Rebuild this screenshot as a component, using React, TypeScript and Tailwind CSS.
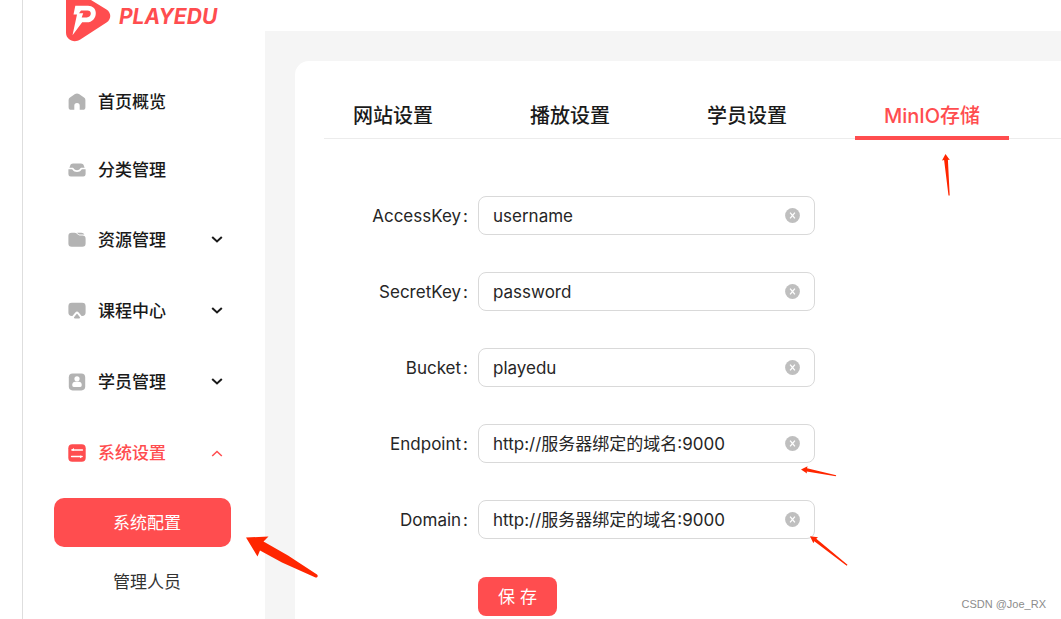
import { useState } from "react";
import type { ReactNode } from "react";

type MenuItem = {
  label: string;
  icon: ReactNode;
  expandable?: boolean;
  active?: boolean;
};

const HomeIcon = () => (
  <svg width="18" height="18" viewBox="0 0 18 18" fill="currentColor" aria-hidden="true">
    <path d="M7 1.100a3.600 3.600 0 0 1 4 0l5 3.400a3 3 0 0 1 1.400 2.500v7.200a2.600 2.600 0 0 1-2.600 2.600h-3.100v-4a2.700 2.700 0 0 0-5.400 0v4H3.200a2.600 2.600 0 0 1-2.600-2.600V7A3 3 0 0 1 2 4.500Z" />
  </svg>
);

const InboxIcon = () => (
  <svg width="18" height="18" viewBox="0 0 18 18" fill="currentColor" aria-hidden="true">
    <path d="M5 2.500h8c1.400 0 2.300.7 2.700 1.800l.9 2.500h-2.800c-1.100 0-1.500.6-2 1.300-.5.800-1 1.100-2.800 1.100s-2.300-.3-2.800-1.100c-.5-.7-.9-1.300-2-1.300H1.400l.9-2.500C2.700 3.200 3.600 2.500 5 2.500Z" />
    <path d="M.4 8.200h3.300c.6 0 .9.300 1.300 1 .7 1.200 1.900 1.700 4 1.700s3.300-.5 4-1.700c.4-.7.7-1 1.300-1h3.300v5a2.400 2.400 0 0 1-2.400 2.400H2.800a2.400 2.400 0 0 1-2.400-2.400Z" />
  </svg>
);

const FolderIcon = () => (
  <svg width="18" height="18" viewBox="0 0 18 18" fill="currentColor" aria-hidden="true">
    <path d="M3.700 1.700h2.800c.9 0 1.600.3 2.200.9l1 1c.5.500 1.100.8 1.800.8h2.800a3.300 3.300 0 0 1 3.300 3.300v4.800a3.300 3.300 0 0 1-3.300 3.300H3.700a3.300 3.300 0 0 1-3.300-3.300V5a3.300 3.300 0 0 1 3.300-3.300Z" />
    <path d="M9 1.700h4.300c1.500 0 2.700.9 3.100 2.100-.5-.2-1-.3-1.600-.3h-3.300c-.5 0-.9-.2-1.200-.5Z" />
  </svg>
);

const CourseIcon = () => (
  <svg width="18" height="18" viewBox="0 0 18 18" fill="currentColor" aria-hidden="true">
    <path d="M3.800.8h10.400a3.400 3.400 0 0 1 3.400 3.400v6.400a3.400 3.400 0 0 1-3.400 3.400h-.6l-2.900-3.400a2.200 2.200 0 0 0-3.400 0L4.400 14h-.6A3.400 3.400 0 0 1 .4 10.600V4.200A3.400 3.400 0 0 1 3.800.8Z" />
    <path d="M8.200 12.400a1 1 0 0 1 1.600 0l2 2.600c.5.700.1 1.500-.7 1.500H6.900c-.8 0-1.200-.8-.7-1.500Z" />
  </svg>
);

const StudentIcon = () => (
  <svg width="18" height="18" viewBox="0 0 18 18" aria-hidden="true">
    <rect x=".8" y=".6" width="16.400" height="16.800" rx="3.800" fill="currentColor" />
    <circle cx="9" cy="5.800" r="2.600" fill="#fff" />
    <path d="M7.200 8.800h3.600c1.700 0 2.900 1.200 2.900 2.800v.9c0 .8-.6 1.400-1.400 1.400H5.700c-.8 0-1.400-.6-1.400-1.400v-.9c0-1.600 1.200-2.800 2.900-2.800Z" fill="#fff" />
  </svg>
);

const SettingIcon = () => (
  <svg width="18" height="18" viewBox="0 0 18 18" aria-hidden="true">
    <rect x=".3" y=".3" width="17.400" height="17.400" rx="4" fill="currentColor" />
    <path d="M4 6h10.400M3.600 12.400H14" stroke="#fff" strokeWidth="1.500" strokeLinecap="round" />
    <path d="M3.200 6 6 4v2.700ZM14.800 12.400 12 14.300v-2.700Z" fill="#fff" />
  </svg>
);

const Chevron = ({ up }: { up?: boolean }) => (
  <svg width="12" height="8" viewBox="0 0 12 8" fill="none" stroke="currentColor" aria-hidden="true">
    <path
      d={up ? "M1.200 7 6 2.500 10.800 7" : "M1.200 1 6 5.500 10.800 1"}
      strokeWidth={up ? 1.5 : 2}
    />
  </svg>
);

const Logo = () => (
  <svg width="45" height="42" viewBox="0 0 45 42" aria-hidden="true">
    <path
      d="M0 0h25l15.500 9.500c5 3.100 5 9.900 0 13L14.300 39.600C8 43.500 0 40 0 32.500Z"
      fill="#ff4d4f"
    />
    <path
      fillRule="evenodd"
      d="M9.300 5.700H22c4.600 0 7.800 2.900 7.800 7.200 0 5.400-3.700 9.400-9 9.400h-4.600L6.500 35.300 11 14.500H7.500ZM15 10.500l-2 2.700h4.200l-1.500 4.300h5c2.500 0 4.100-1.600 4.100-3.900 0-1.900-1.200-3.100-3.300-3.100Z"
      fill="#fff"
    />
  </svg>
);

const menuItems: MenuItem[] = [
  { label: "首页概览", icon: <HomeIcon /> },
  { label: "分类管理", icon: <InboxIcon /> },
  { label: "资源管理", icon: <FolderIcon />, expandable: true },
  { label: "课程中心", icon: <CourseIcon />, expandable: true },
  { label: "学员管理", icon: <StudentIcon />, expandable: true },
  { label: "系统设置", icon: <SettingIcon />, expandable: true, active: true },
];

const tabs = ["网站设置", "播放设置", "学员设置", "MinIO存储"];

const fields = [
  { name: "AccessKey", value: "username" },
  { name: "SecretKey", value: "password" },
  { name: "Bucket", value: "playedu" },
  { name: "Endpoint", value: "http://服务器绑定的域名:9000" },
  { name: "Domain", value: "http://服务器绑定的域名:9000" },
];

const Sidebar = () => (
  <aside className="ml-[22px] w-[243px] shrink-0 border-l border-[#dedede]">
    <div className="flex h-[68px] items-start pl-[43px]">
      <Logo />
      <span className="mt-[5px] ml-2 text-[21px] leading-6 font-bold text-[#ff4d4f] italic">
        PLAYEDU
      </span>
    </div>
    <nav>
      {menuItems.map((item) => (
        <button
          key={item.label}
          type="button"
          className={`flex w-full items-center gap-3 pr-[42px] pl-[45px] text-[17px] ${
            item.expandable ? "h-[71px]" : "h-[68px]"
          } ${item.active ? "text-[#ff4d4f]" : "text-[#1a1a1a]"}`}
        >
          <span className={item.active ? "" : "text-[#b3b3b3]"}>{item.icon}</span>
          <span className="pt-0.5 font-medium">{item.label}</span>
          {item.expandable && (
            <span className="ml-auto">
              <Chevron up={item.active} />
            </span>
          )}
        </button>
      ))}
      <div className="mt-[10px] mr-[34px] ml-[31px] flex flex-col gap-[10px]">
        <button
          type="button"
          className="h-[49px] rounded-[10px] bg-[#ff4d4f] pt-0.5 pl-[59px] text-left text-[17px] text-white"
        >
          系统配置
        </button>
        <button
          type="button"
          className="h-[49px] pt-0.5 pl-[59px] text-left text-[17px] text-[#333]"
        >
          管理人员
        </button>
      </div>
    </nav>
  </aside>
);

const ConfigField = ({ name, value }: { name: string; value: string }) => {
  const [text, setText] = useState(value);

  return (
    <div className="flex items-center">
      <label htmlFor={name} className="w-36 pt-0.5 text-right text-[17px] text-[#262626]">
        {name}
        <span className="ml-[2px]">:</span>
      </label>
      <div className="ml-[10px] flex h-[39px] w-[337px] items-center rounded-lg border border-[#d9d9d9] px-[14px]">
        <input
          id={name}
          value={text}
          onChange={(e) => setText(e.target.value)}
          className="min-w-0 flex-1 pt-0.5 text-[17px] text-[#262626] outline-none"
        />
        <button type="button" aria-label={`Clear ${name}`} onClick={() => setText("")}>
          <svg width="15" height="15" viewBox="0 0 15 15" aria-hidden="true">
            <circle cx="7.500" cy="7.500" r="7.400" fill="#bfbfbf" />
            <path d="m5.100 4.600 4.800 5.800m0-5.800-4.800 5.800" stroke="#fff" strokeWidth="1.300" />
          </svg>
        </button>
      </div>
    </div>
  );
};

// hand drawn pointers laid over the page
const Pointers = () => (
  <div className="pointer-events-none text-[#ff2600]">
    <svg className="absolute top-[154px] left-[941px]" width="10" height="42" viewBox="0 0 10 42" fill="currentColor" aria-hidden="true">
      <path d="M4.500 0 8.800 6 6.900 5.700 8.700 41.500H7.500L3.100 5.900 1 6.500Z" />
    </svg>
    <svg className="absolute top-[466px] left-[801px]" width="36" height="11" viewBox="0 0 36 11" fill="currentColor" aria-hidden="true">
      <path d="M0 3.400 6.600.3 6 2.200 35.200 9.200 34.800 10.200 5.700 5.400 6 7.500Z" />
    </svg>
    <svg className="absolute top-[536px] left-[810px]" width="38" height="30" viewBox="0 0 38 30" fill="currentColor" aria-hidden="true">
      <path d="M0 .3 8 1.200 6.300 2.700 37.500 28.800 36.700 29.700 4.300 5.300 3.400 7.300Z" />
    </svg>
    <svg className="absolute top-[536px] left-[246px]" width="73" height="43" viewBox="0 0 73 43" fill="currentColor" aria-hidden="true">
      <path d="M0 1.500 22.500.5 17.500 5.500 42 19.500 71 38.500c1.500 1.500.5 3.500-1.500 3L36 26.500 14 14.500 11.500 20.500Z" />
    </svg>
  </div>
);

const App = () => {
  const [currentTab, setCurrentTab] = useState("MinIO存储");

  return (
    <div className="relative flex min-h-screen overflow-hidden bg-white font-[Inter,'Noto_Sans_CJK_SC',sans-serif]">
      <Sidebar />
      <main className="flex min-w-0 flex-1 flex-col">
        <div className="h-[31px] shrink-0" />
        <div className="flex flex-1 flex-col bg-[#f5f5f5] pt-[30px] pl-[30px]">
          <section className="flex-1 rounded-tl-[14px] bg-white pt-[30px] pl-[29px]">
            <div role="tablist" className="flex h-12 gap-[39px] border-b border-[#ececec]">
              {tabs.map((tab) => (
                <button
                  key={tab}
                  type="button"
                  role="tab"
                  aria-selected={tab === currentTab}
                  onClick={() => setCurrentTab(tab)}
                  className={`h-[49px] shrink-0 border-b-4 px-[29px] pt-1 text-[20px] font-medium whitespace-nowrap ${
                    tab === currentTab
                      ? "border-[#ff4d4f] text-[#ff4d4f]"
                      : "border-transparent text-[#1a1a1a]"
                  }`}
                >
                  {tab}
                </button>
              ))}
            </div>
            <form className="mt-[57px]" onSubmit={(e) => e.preventDefault()}>
              <div className="flex flex-col gap-[37px]">
                {fields.map((field) => (
                  <ConfigField key={field.name} name={field.name} value={field.value} />
                ))}
              </div>
              <button
                type="submit"
                className="mt-[38px] ml-[154px] h-[39px] w-[79px] rounded-lg bg-[#ff4d4f] pt-0.5 text-[17px] text-white"
              >
                保 存
              </button>
            </form>
          </section>
        </div>
      </main>
      <Pointers />
      <span className="absolute right-[15px] bottom-[7px] font-['Liberation_Sans',sans-serif] text-[11px] leading-4 text-[#8c8c8c]">
        CSDN @Joe_RX
      </span>
    </div>
  );
};

export default App;
